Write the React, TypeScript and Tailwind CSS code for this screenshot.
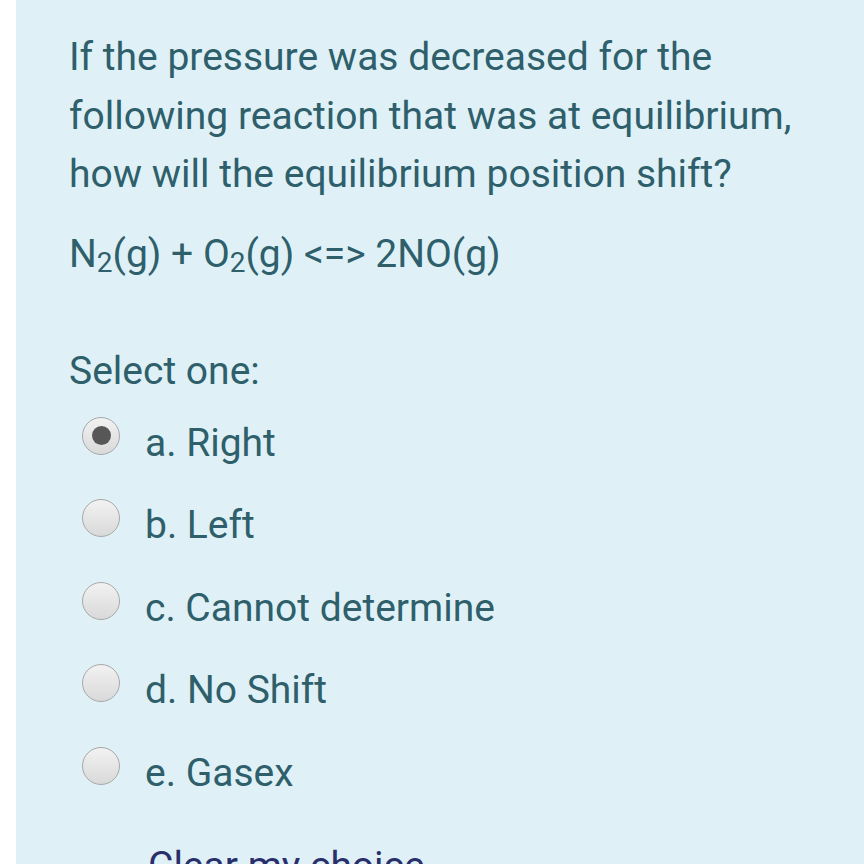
import React from "react";

function Radio({ checked }: { checked?: boolean }) {
  return (
    <div className="w-[38px] h-[38px] rounded-full border border-[#a8a8a8] bg-gradient-to-b from-[#f2f2f2] to-[#d9d9d9] flex items-center justify-center shrink-0">
      {checked && <div className="w-[19px] h-[19px] rounded-full bg-[#575757]" />}
    </div>
  );
}

const options = [
  { label: "a. Right", checked: true },
  { label: "b. Left" },
  { label: "c. Cannot determine" },
  { label: "d. No Shift" },
  { label: "e. Gasex" },
];

export default function App() {
  return (
    <div className="w-[864px] h-[864px] bg-white flex overflow-hidden" style={{ fontFamily: "Roboto, sans-serif" }}>
      <div className="ml-[16px] flex-1 bg-[#dff1f7] pl-[53px] pt-[28px] text-[#2e5f6b]">
        <p className="text-[39px] leading-[58.5px]">
          If the pressure was decreased for the
          <br />
          following reaction that was at equilibrium,
          <br />
          how will the equilibrium position shift?
        </p>
        <p className="text-[39px] leading-[58px] mt-[21px]">
          N<sub className="text-[28px] relative top-[5px] align-baseline">2</sub>(g) + O
          <sub className="text-[28px] relative top-[5px] align-baseline">2</sub>(g) &lt;=&gt; 2NO(g)
        </p>
        <p className="text-[39px] leading-[58px] mt-[59px]">Select one:</p>
        <div className="flex flex-col mt-[2px]">
          {options.map((o) => (
            <div key={o.label} className="flex items-center h-[82.5px] -ml-[56px] pl-[69px]">
              <div className="-mt-[14px]">
                <Radio checked={o.checked} />
              </div>
              <span className="text-[39px] ml-[25px] leading-[58px]">{o.label}</span>
            </div>
          ))}
        </div>
        <p className="text-[39px] leading-[58px] mt-[23px] ml-[79px] text-[#2a2f6c]">Clear my choice</p>
      </div>
    </div>
  );
}
